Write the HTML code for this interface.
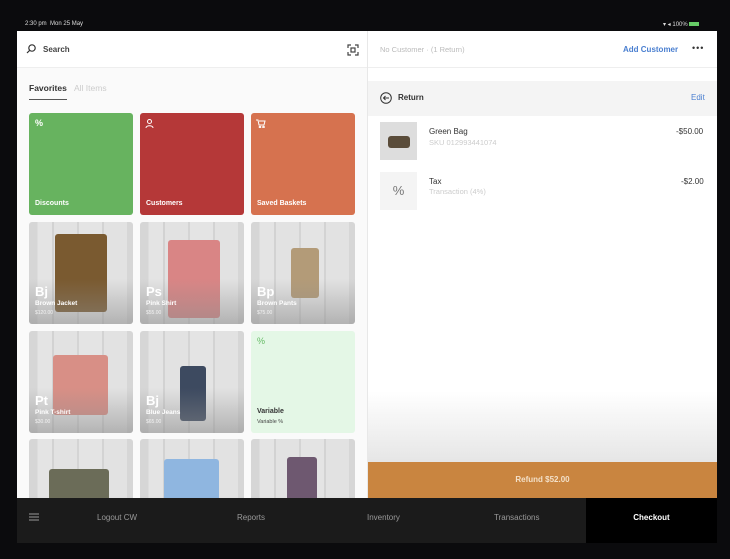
<!DOCTYPE html>
<html><head><meta charset="utf-8"><style>
*{margin:0;padding:0;box-sizing:border-box}
body{width:730px;height:559px;background:#0b0b0d;font-family:"Liberation Sans",sans-serif;position:relative;overflow:hidden}
.abs{position:absolute}
.sb{color:#ddd;font-size:6px;top:21px}
.left{left:17px;top:31px;width:350px;height:467px;background:#fafafa;overflow:hidden}
.right{left:368px;top:31px;width:349px;height:467px;background:linear-gradient(#fff 0,#fff 360px,#e6e6e6 430px)}
.tile{position:absolute;width:104px;height:102px;border-radius:3px;overflow:hidden}
.tile .t{position:absolute;left:6px;bottom:8px;color:#fff;font-size:7px;font-weight:bold}
.ph{background:linear-gradient(90deg,#d6d6d6 0 8%,#e4e4e4 8% 22%,#d2d2d2 22% 24%,#e2e2e2 24% 46%,#d4d4d4 46% 48%,#e4e4e4 48% 70%,#d3d3d3 70% 72%,#e2e2e2 72% 94%,#d6d6d6 94%)}
.ph::after{content:"";position:absolute;left:0;right:0;bottom:0;height:45px;background:linear-gradient(rgba(150,150,150,0),rgba(140,140,140,.55))}
.ab{position:absolute;left:6px;z-index:2;color:#fff}
.ab b{display:block;font-size:13px;margin-bottom:1px}
.ab i{display:block;font-style:normal;font-size:6.5px;font-weight:bold}
.ab s{display:block;text-decoration:none;font-size:5px;opacity:.8;margin-top:3px}
.g{position:absolute;border-radius:3px}
.nav{left:17px;top:498px;width:700px;height:45px;background:#1b1b1b;color:#999;font-size:8px}
.nav span{position:absolute;top:15px}
</style></head><body>
<div class="abs sb" style="left:25px">2:30 pm &nbsp;Mon 25 May</div>
<div class="abs sb" style="left:663px">▾ ◂ 100% <span style="display:inline-block;width:10px;height:4px;background:#6c6"></span></div>
<div class="abs" style="left:367px;top:31px;width:1px;height:467px;background:#e8e8e8"></div>

<div class="abs left">
  <div class="abs" style="left:0;top:0;width:350px;height:37px;background:#fff;border-bottom:1px solid #eee"></div>
  <svg class="abs" style="left:9px;top:13px" width="10" height="10"><circle cx="6" cy="4" r="3.2" fill="none" stroke="#333" stroke-width="1.2"/><line x1="3.6" y1="6.4" x2="1" y2="9" stroke="#333" stroke-width="1.2"/></svg>
  <div class="abs" style="left:26px;top:14px;font-size:8px;font-weight:bold;color:#444">Search</div>
  <svg class="abs" style="left:330px;top:13px" width="12" height="12" fill="none" stroke="#444" stroke-width="1.2"><path d="M1 4V1h3M8 1h3v3M11 8v3H8M4 11H1V8"/><rect x="4" y="4" width="4" height="4"/></svg>
  <div class="abs" style="left:12px;top:52px;font-size:8.5px;font-weight:bold;color:#333">Favorites</div>
  <div class="abs" style="left:57px;top:52px;font-size:8.5px;color:#ccc">All Items</div>
  <div class="abs" style="left:12px;top:68px;width:38px;height:1px;background:#555"></div>

  <div class="tile" style="left:12px;top:82px;background:#67b35f"><div class="abs" style="left:6px;top:5px;color:#fff;font-size:9px;font-weight:bold">%</div><div class="t">Discounts</div></div>
  <div class="tile" style="left:123px;top:82px;background:#b53838"><svg class="abs" style="left:5px;top:6px" width="9" height="9" fill="none" stroke="#fff"><circle cx="4.5" cy="2.5" r="2"/><path d="M1 9c0-3 7-3 7 0"/></svg><div class="t">Customers</div></div>
  <div class="tile" style="left:234px;top:82px;background:#d6724f"><svg class="abs" style="left:5px;top:6px" width="10" height="9" fill="none" stroke="#fff"><path d="M0 1h2l1 5h5l1-4H3"/><circle cx="4" cy="8" r=".8"/><circle cx="7.5" cy="8" r=".8"/></svg><div class="t">Saved Baskets</div></div>

  <div class="tile ph" style="left:12px;top:191px"><div class="g" style="left:26px;top:12px;width:52px;height:78px;background:#7a5a30"></div><div class="ab" style="top:62px"><b>Bj</b><i>Brown Jacket</i><s>$120.00</s></div></div>
  <div class="tile ph" style="left:123px;top:191px"><div class="g" style="left:28px;top:18px;width:52px;height:78px;background:#d98585"></div><div class="ab" style="top:62px"><b>Ps</b><i>Pink Shirt</i><s>$55.00</s></div></div>
  <div class="tile ph" style="left:234px;top:191px"><div class="g" style="left:40px;top:26px;width:28px;height:50px;background:#b39b78"></div><div class="ab" style="top:62px"><b>Bp</b><i>Brown Pants</i><s>$75.00</s></div></div>

  <div class="tile ph" style="left:12px;top:300px"><div class="g" style="left:24px;top:24px;width:55px;height:60px;background:#d88f86"></div><div class="ab" style="top:62px"><b>Pt</b><i>Pink T-shirt</i><s>$30.00</s></div></div>
  <div class="tile ph" style="left:123px;top:300px"><div class="g" style="left:40px;top:35px;width:26px;height:55px;background:#3d4a60"></div><div class="ab" style="top:62px"><b>Bj</b><i>Blue Jeans</i><s>$65.00</s></div></div>
  <div class="tile" style="left:234px;top:300px;background:#e4f7e6"><div class="abs" style="left:6px;top:5px;color:#6b6;font-size:9px">%</div><div class="abs" style="left:6px;top:77px;font-size:7px;font-weight:bold;color:#333">Variable</div><div class="abs" style="left:6px;top:88px;font-size:5.5px;color:#444">Variable %</div></div>

  <div class="tile ph" style="left:12px;top:408px"><div class="g" style="left:20px;top:30px;width:60px;height:40px;background:#6b6c58"></div></div>
  <div class="tile ph" style="left:123px;top:408px"><div class="g" style="left:24px;top:20px;width:55px;height:50px;background:#8fb6e0"></div></div>
  <div class="tile ph" style="left:234px;top:408px"><div class="g" style="left:36px;top:18px;width:30px;height:50px;background:#6e5870"></div></div>
</div>

<div class="abs right">
  <div class="abs" style="left:0;top:0;width:349px;height:37px;border-bottom:1px solid #eee"></div>
  <div class="abs" style="left:12px;top:14px;font-size:7.5px;color:#bbb">No Customer · (1 Return)</div>
  <div class="abs" style="left:255px;top:14px;font-size:8px;font-weight:bold;color:#4a7fd0">Add Customer</div>
  <div class="abs" style="left:324px;top:12px;font-size:9px;color:#333;letter-spacing:1px">•••</div>
  <div class="abs" style="left:0;top:50px;width:349px;height:35px;background:#f4f4f4"></div>
  <svg class="abs" style="left:12px;top:61px" width="12" height="12" fill="none" stroke="#333" stroke-width="1"><circle cx="6" cy="6" r="5.3"/><path d="M9 6H3.5M5.5 4L3.5 6l2 2"/></svg>
  <div class="abs" style="left:30px;top:62px;font-size:8px;font-weight:bold;color:#333">Return</div>
  <div class="abs" style="left:323px;top:62px;font-size:8px;color:#4a7fd0">Edit</div>
  <div class="abs" style="left:12px;top:91px;width:37px;height:38px;background:#ddd"><div class="g" style="left:8px;top:14px;width:22px;height:12px;background:#5a4c3a"></div></div>
  <div class="abs" style="left:61px;top:96px;font-size:8px;color:#333">Green Bag</div>
  <div class="abs" style="left:61px;top:107px;font-size:7.5px;color:#ccc">SKU 012993441074</div>
  <div class="abs" style="left:308px;top:96px;font-size:8px;color:#333">-$50.00</div>
  <div class="abs" style="left:12px;top:141px;width:37px;height:38px;background:#f4f4f4;color:#777;font-size:13px;text-align:center;line-height:38px">%</div>
  <div class="abs" style="left:61px;top:146px;font-size:8px;color:#333">Tax</div>
  <div class="abs" style="left:61px;top:156px;font-size:7.5px;color:#ccc">Transaction (4%)</div>
  <div class="abs" style="left:313px;top:146px;font-size:8px;color:#333">-$2.00</div>
  <div class="abs" style="left:0;top:431px;width:349px;height:36px;background:#c98540;color:#f3e0c8;font-size:8px;font-weight:bold;text-align:center;line-height:36px">Refund $52.00</div>
</div>

<div class="abs nav">
  <svg class="abs" style="left:12px;top:15px" width="10" height="8" stroke="#999"><path d="M0 1h10M0 4h10M0 7h10"/></svg>
  <span style="left:80px">Logout CW</span>
  <span style="left:220px">Reports</span>
  <span style="left:350px">Inventory</span>
  <span style="left:477px">Transactions</span>
  <div class="abs" style="left:569px;top:0;width:131px;height:45px;background:#000;color:#fff;font-weight:bold;text-align:center;line-height:39px">Checkout</div>
</div>
</body></html>
